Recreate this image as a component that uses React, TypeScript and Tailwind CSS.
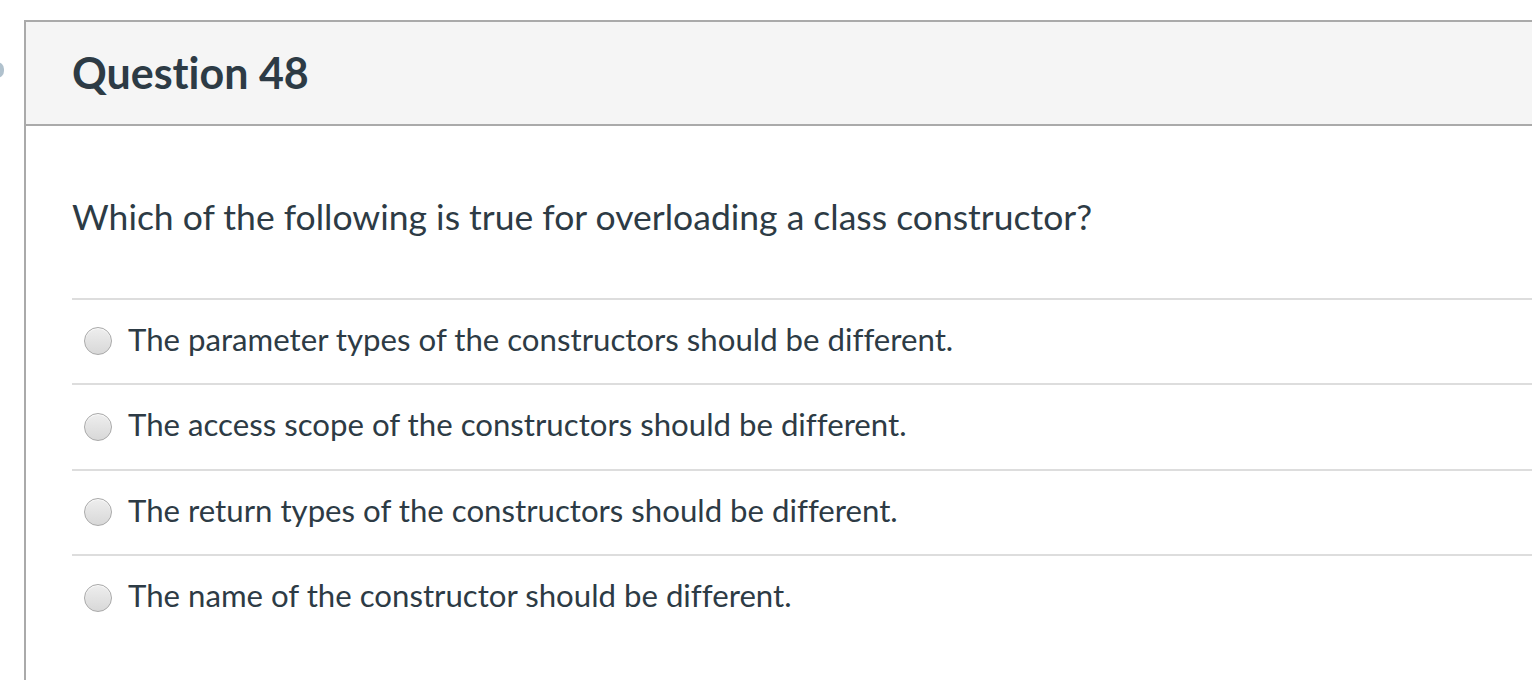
const answers = [
  "The parameter types of the constructors should be different.",
  "The access scope of the constructors should be different.",
  "The return types of the constructors should be different.",
  "The name of the constructor should be different.",
];

function Radio() {
  return (
    <span className="block h-[28px] w-[28px] shrink-0 rounded-full border border-[#a9a9a9] bg-[linear-gradient(#eeeeee,#d8d8d8)] shadow-[inset_0_1px_1px_rgba(255,255,255,0.8)]" />
  );
}

export default function App() {
  return (
    <div
      className="relative min-h-[682px] overflow-hidden bg-white pt-[20px] text-[#2d3b45] [font-variant-ligatures:none]"
      style={{ fontFamily: "Lato, 'Liberation Sans', sans-serif" }}
    >
      <span className="absolute left-[-10px] top-[62px] h-[16px] w-[14px] rounded-full bg-[#8ea6b8] opacity-70" />
      <div className="ml-[24px] border-l-2 border-t-2 border-[#aaaaaa]">
        <div className="flex h-[104px] items-center border-b-2 border-[#aaaaaa] bg-[#f5f5f5] pl-[46px]">
          <h2 className="pb-[2px] text-[43px] font-bold leading-none">Question 48</h2>
        </div>
        <div className="pl-[46px] pt-[73px]">
          <p className="text-[35.5px] leading-none">
            Which of the following is true for overloading a class constructor?
          </p>
          <ul className="mt-[63px]">
            {answers.map((a) => (
              <li
                key={a}
                className="flex h-[85.5px] items-center gap-[16px] border-t-2 border-[#dddddd] pl-[12px]"
              >
                <Radio />
                <span className="mb-[4px] text-[31.2px] leading-none">{a}</span>
              </li>
            ))}
          </ul>
          <div className="h-[40px]" />
        </div>
      </div>
    </div>
  );
}
